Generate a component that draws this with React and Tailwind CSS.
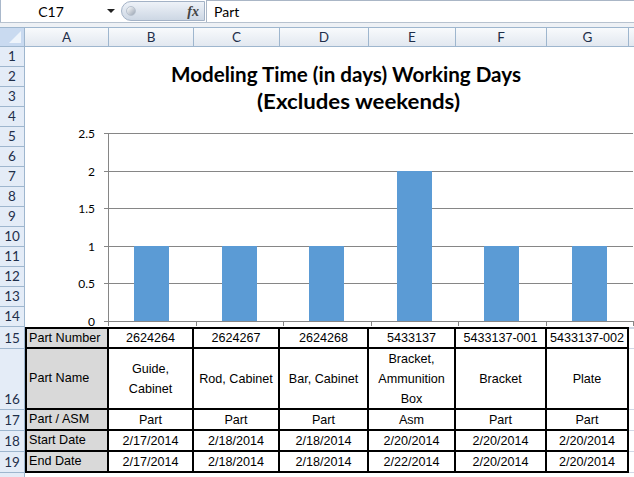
import React from 'react';

const headerCols = [
  { id: 'A', cls: 'w-[84px]' },
  { id: 'B', cls: 'w-[85px]' },
  { id: 'C', cls: 'w-[86px]' },
  { id: 'D', cls: 'w-[89px]' },
  { id: 'E', cls: 'w-[87px]' },
  { id: 'F', cls: 'w-[91px]' },
  { id: 'G', cls: 'w-[82px]' },
];

const dataCols = ['w-[85px]', 'w-[86px]', 'w-[89px]', 'w-[87px]', 'w-[91px]', 'w-[82px]'];

const rowHeads = [
  ...Array.from({ length: 14 }, (_, i) => ({ n: i + 1, cls: 'h-[20px]' })),
  { n: 15, cls: 'h-[22px]' },
  { n: 16, cls: 'h-[61px]' },
  { n: 17, cls: 'h-[21px]' },
  { n: 18, cls: 'h-[21px]' },
  { n: 19, cls: 'h-[21px]' },
  { n: 20, cls: 'h-[20px]' },
];

const tableRows = [
  {
    label: 'Part Number',
    cls: 'h-[22px] border-t-2',
    vals: ['2624264', '2624267', '2624268', '5433137', '5433137-001', '5433137-002'],
  },
  {
    label: 'Part Name',
    cls: 'h-[61px]',
    vals: [['Guide,', 'Cabinet'], ['Rod, Cabinet'], ['Bar, Cabinet'], ['Bracket,', 'Ammunition', 'Box'], ['Bracket'], ['Plate']],
  },
  { label: 'Part / ASM', cls: 'h-[21px]', vals: ['Part', 'Part', 'Part', 'Asm', 'Part', 'Part'] },
  {
    label: 'Start Date',
    cls: 'h-[21px]',
    vals: ['2/17/2014', '2/18/2014', '2/18/2014', '2/20/2014', '2/20/2014', '2/20/2014'],
  },
  {
    label: 'End Date',
    cls: 'h-[21px]',
    vals: ['2/17/2014', '2/18/2014', '2/18/2014', '2/22/2014', '2/20/2014', '2/20/2014'],
  },
];

const bars = [1, 1, 1, 2, 1, 1];
const ticks = ['2.5', '2', '1.5', '1', '0.5', '0'];

function Chart() {
  const left = 83;
  const top = 86;
  const step = 37.6;
  const bottom = top + step * 5;
  const right = 608;
  const cat = (right - left) / 6;
  return (
    <svg width="609" height="280" className="block overflow-visible" overflow="visible" shapeRendering="crispEdges">
      <text x="146" y="35" textLength="350" lengthAdjust="spacingAndGlyphs" fontFamily="Lato, sans-serif" fontWeight="700" fontSize="20" fill="#000">
        Modeling Time (in days) Working Days
      </text>
      <text x="232" y="62" textLength="203" lengthAdjust="spacingAndGlyphs" fontFamily="Lato, sans-serif" fontWeight="700" fontSize="20" fill="#000">
        (Excludes weekends)
      </text>
      {ticks.map((t, i) => {
        const y = Math.round(top + i * step) + 0.5;
        return (
          <g key={t}>
            <line x1={left - 4} x2={right} y1={y} y2={y} stroke="#868686" strokeWidth="1" />
            <text x="70" y={y + 4} textAnchor="end" fontFamily="Lato, sans-serif" fontSize="12" fill="#000" shapeRendering="auto">
              {t}
            </text>
          </g>
        );
      })}
      {bars.map((v, i) => {
        const x = Math.round(left + i * cat + cat * 0.3);
        const h = v * step * 2;
        return <rect key={i} x={x} y={Math.round(bottom - h)} width="35" height={Math.round(h)} fill="#5b9bd5" />;
      })}
      <line x1={left + 0.5} x2={left + 0.5} y1={top} y2={bottom + 1} stroke="#868686" />
      {Array.from({ length: 7 }, (_, k) => {
        const x = Math.round(left + k * cat) + 0.5;
        return <line key={k} x1={x} x2={x} y1={bottom} y2={bottom + 5} stroke="#868686" />;
      })}
    </svg>
  );
}

function NameBox() {
  return (
    <div className="flex h-full w-[119px] items-center border-l border-[#a9b8cb] bg-white">
      <div className="w-[100px] text-center text-[14px] text-black">C17</div>
      <svg width="9" height="5" className="ml-[6px]">
        <path d="M0 0 H8 L4 4 Z" fill="#222" />
      </svg>
    </div>
  );
}

function FxPill() {
  return (
    <div className="ml-[2px] flex h-[20px] w-[84px] items-center rounded-l-full border border-[#a3b2c6] bg-gradient-to-b from-[#eef2f8] to-[#cdd7e4] pl-[4px] pr-[5px]">
      <div className="h-[10px] w-[10px] rounded-full border border-[#b8c2cf] bg-gradient-to-br from-[#ffffff] to-[#9aa5b3]" />
      <div className="flex-1" />
      <span className="font-['Liberation_Serif'] text-[14px] font-bold italic text-[#444]">fx</span>
    </div>
  );
}

export default function App() {
  return (
    <div className="h-[477px] w-[634px] overflow-hidden bg-white font-['Lato',sans-serif] text-black">
      <div className="flex h-[23px] items-center border-b border-[#b7c2cf] bg-white">
        <NameBox />
        <FxPill />
        <div className="ml-[1px] flex h-full flex-1 items-center border-l border-t border-[#aab6c6] bg-white pl-[7px] text-[14px]">
          Part
        </div>
      </div>
      <div className="h-[4px] bg-[#eef1f5]" />

      <div className="flex h-[20px] border-b border-t border-[#9eb6ce] bg-gradient-to-b from-[#f8fafc] to-[#e2e8f0] text-[13.5px] text-[#1f2f4a]">
        <div className="flex w-[25px] items-center justify-center border-r border-[#9eb6ce] bg-[#c9daf0]">
          <svg width="24" height="18">
            <path d="M21 3 V15 H9 Z" fill="#eef4fb" />
          </svg>
        </div>
        {headerCols.map((c) => (
          <div key={c.id} className={`${c.cls} flex items-center justify-center border-r border-[#9eb6ce]`}>
            {c.id}
          </div>
        ))}
        <div className="flex-1" />
      </div>

      <div className="flex">
        <div className="w-[25px] shrink-0 border-r border-[#9eb6ce] bg-[#e4ecf7] text-[13.5px] text-[#1f2f4a]">
          {rowHeads.map((r) => (
            <div key={r.n} className={`${r.cls} flex items-end justify-center border-b border-[#9eb6ce] pb-[1px] leading-[17px]`}>
              {r.n}
            </div>
          ))}
        </div>

        <div className="flex-1">
          <div className="relative z-10 h-[280px] bg-white">
            <Chart />
          </div>

          <div className="font-['Liberation_Sans',Arial,sans-serif] text-[12.6px] text-black">
            {tableRows.map((row) => (
              <div key={row.label} className="flex">
                <div className={`${row.cls} flex w-[84px] shrink-0 items-center border-b-2 border-l-2 border-r-2 border-black bg-[#d9d9d9] pl-[2px]`}>
                  {row.label}
                </div>
                {row.vals.map((v, i) => (
                  <div
                    key={i}
                    className={`${row.cls} ${dataCols[i]} flex shrink-0 flex-col items-center justify-center border-b-2 border-r-2 border-black text-center leading-[20px]`}
                  >
                    {Array.isArray(v) ? v.map((line) => <div key={line}>{line}</div>) : v}
                  </div>
                ))}
                <div className={`${row.cls} flex-1 border-b border-t-0 border-[#d0d7e5]`} />
              </div>
            ))}
          </div>
        </div>
      </div>
    </div>
  );
}
